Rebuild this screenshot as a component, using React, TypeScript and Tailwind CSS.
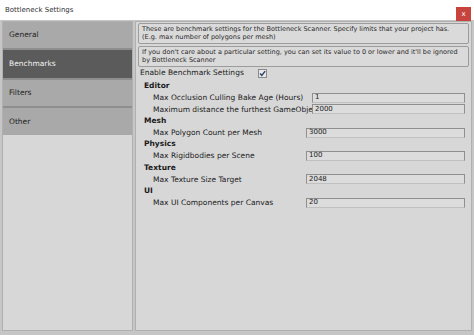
import React from 'react';

const TABS = [
  { label: 'General', active: false, h: 'h-[28px]' },
  { label: 'Benchmarks', active: true, h: 'h-[30px]' },
  { label: 'Filters', active: false, h: 'h-[28px]' },
  { label: 'Other', active: false, h: 'h-[27px]' },
];

type Row = { label: string; value: string; wide?: boolean };
const SECTIONS: { title: string; rows: Row[] }[] = [
  {
    title: 'Editor',
    rows: [
      { label: 'Max Occlusion Culling Bake Age (Hours)', value: '1', wide: true },
      { label: 'Maximum distance the furthest GameObje', value: '2000', wide: true },
    ],
  },
  { title: 'Mesh', rows: [{ label: 'Max Polygon Count per Mesh', value: '3000' }] },
  { title: 'Physics', rows: [{ label: 'Max Rigidbodies per Scene', value: '100' }] },
  { title: 'Texture', rows: [{ label: 'Max Texture Size Target', value: '2048' }] },
  { title: 'UI', rows: [{ label: 'Max UI Components per Canvas', value: '20' }] },
];

const font = { fontFamily: '"DejaVu Sans", Verdana, sans-serif' };

export default function App() {
  return (
    <div className="w-[474px] h-[335px] bg-[#c6c6c6] flex flex-col text-[#1a1a1a]" style={font}>
      <div className="h-[20px] bg-white flex items-start justify-between pl-[5px] pr-[3px]">
        <span className="text-[7px] leading-[20px] text-[#333]">Bottleneck Settings</span>
        <div className="mt-[7px] w-[15px] h-[14px] bg-[#c7433d] flex items-center justify-center text-white text-[7px] leading-none">
          x
        </div>
      </div>

      <div className="flex-1 flex gap-[2px] px-[2px] pt-[1px] pb-[4px]">
        <div className="w-[131px] bg-[#d7d7d7] border border-[#b0b0b0] flex flex-col">
          {TABS.map((t, i) => (
            <div
              key={t.label}
              className={`${t.h} flex items-center pl-[6px] text-[7.5px] ${
                t.active ? 'bg-[#5b5b5b] text-[#f2f2f2]' : 'bg-[#a9a9a9] text-[#222]'
              } ${i < TABS.length - 1 ? 'border-b-2 border-[#8e8e8e]' : ''}`}
            >
              {t.label}
            </div>
          ))}
        </div>

        <div className="flex-1 bg-[#d7d7d7] border border-[#b0b0b0] px-[2px] pt-[1px] flex flex-col">
          <div className="border border-[#9c9c9c] rounded-[2px] bg-[#dadada] px-[3px] py-[2px] text-[6.5px] leading-[7.5px] text-[#2a2a2a]">
            These are benchmark settings for the Bottleneck Scanner. Specify limits that your project has.
            <br />
            (E.g. max number of polygons per mesh)
          </div>
          <div className="mt-[2px] border border-[#9c9c9c] rounded-[2px] bg-[#dadada] px-[3px] py-[2px] text-[6.5px] leading-[7.5px] text-[#2a2a2a]">
            If you don't care about a particular setting, you can set its value to 0 or lower and it'll be ignored
            <br />
            by Bottleneck Scanner
          </div>

          <div className="flex items-center h-[12px] pl-[2px] text-[7.5px]">
            <span className="w-[118px]">Enable Benchmark Settings</span>
            <div className="w-[9px] h-[9px] bg-[#e8e8e8] border border-[#8a8a8a] flex items-center justify-center">
              <svg viewBox="0 0 10 10" className="w-[9px] h-[9px]">
                <path d="M1.5 5 L4 7.8 L8.8 1.5" fill="none" stroke="#27406a" strokeWidth="2" />
              </svg>
            </div>
          </div>

          <div className="pt-[1px] flex flex-col">
            {SECTIONS.map((s) => (
              <div key={s.title} className="flex flex-col">
                <div className="h-[11.7px] pl-[6px] text-[7.5px] font-bold leading-[12px]">{s.title}</div>
                {s.rows.map((r) => (
                  <div key={r.label} className="h-[11.7px] flex items-center pl-[15px] pr-[4px] text-[7.5px]">
                    <span className={`${r.wide ? 'w-[159px]' : 'w-[153px]'} whitespace-nowrap overflow-hidden`}>
                      {r.label}
                    </span>
                    <div className="flex-1 h-[10px] bg-[#dcdcdc] border border-[#8f8f8f] border-b-[#c0c0c0] flex items-center pl-[2px] text-[7px] leading-none">
                      {r.value}
                    </div>
                  </div>
                ))}
              </div>
            ))}
          </div>
        </div>
      </div>
    </div>
  );
}
